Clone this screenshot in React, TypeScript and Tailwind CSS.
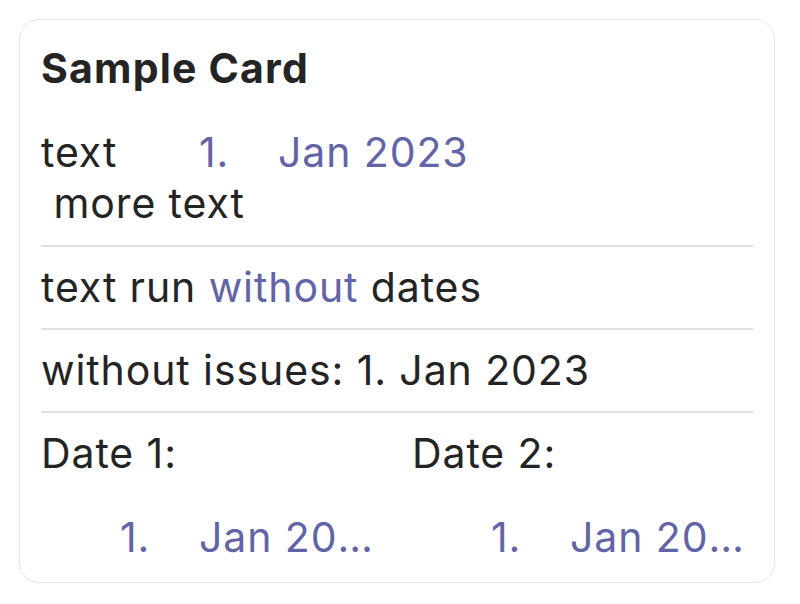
import React from 'react';

const font = { fontFamily: 'Inter, "Noto Sans", sans-serif' };

const DateParts: React.FC<{ lead?: string }> = ({ lead }) => (
  <div className="flex min-w-0 items-baseline">
    <span className="w-[79px] shrink-0 whitespace-pre">{lead ?? ''}</span>
    <span className="w-[79px] shrink-0 text-[#6264a7]">1.</span>
    <span className="min-w-0 truncate pr-[4px] text-[#6264a7]">Jan 2023</span>
  </div>
);

const App: React.FC = () => {
  return (
    <div className="min-h-[604px] w-[800px] bg-white pl-[19px] pt-[19px]" style={font}>
      <div className="w-[756px] rounded-[20px] border border-[#e6e6e6] bg-white px-[21px] pb-[19px] pt-[23px] text-[41px] leading-[51px] tracking-[0.9px] text-[#242424]">
        {/* Title */}
        <h1 className="font-bold tracking-[1.2px]">Sample Card</h1>

        {/* Row with inline date */}
        <div className="mt-[33px] pb-[16px]">
          <div className="flex items-baseline">
            <span className="w-[158px] shrink-0">text</span>
            <span className="w-[79px] shrink-0 text-[#6264a7]">1.</span>
            <span className="text-[#6264a7]">Jan 2023</span>
          </div>
          <div className="whitespace-pre"> more text</div>
        </div>
        <div className="h-[2px] bg-[#e0e0e0]" />

        <div className="py-[15px]">
          text run <span className="text-[#6264a7]">without</span> dates
        </div>
        <div className="h-[2px] bg-[#e0e0e0]" />

        <div className="py-[15px]">without issues: 1. Jan 2023</div>
        <div className="h-[2px] bg-[#e0e0e0]" />

        {/* Two date columns */}
        <div className="grid grid-cols-2 gap-x-[30px] pt-[15px]">
          <div className="min-w-0">
            <div>Date 1:</div>
            <div className="mt-[33px]">
              <DateParts />
            </div>
          </div>
          <div className="min-w-0">
            <div>Date 2:</div>
            <div className="mt-[33px]">
              <DateParts />
            </div>
          </div>
        </div>
      </div>
    </div>
  );
};

export default App;
